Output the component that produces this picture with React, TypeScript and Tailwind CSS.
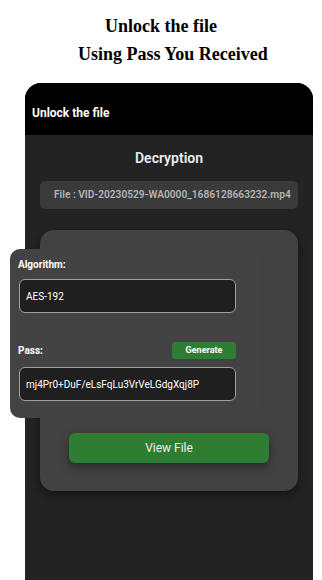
import React from "react";

export default function App() {
  return (
    <div className="w-[322px] h-[580px] bg-white overflow-hidden" style={{ fontFamily: "Roboto, 'Noto Sans', sans-serif" }}>
      {/* Caption above the phone */}
      <div className="h-[83px] pt-[12px] text-black font-bold text-[18px] leading-[28px]" style={{ fontFamily: "'Liberation Serif', serif" }}>
        <div className="pl-[105px]">Unlock the file</div>
        <div className="pl-[78px]">Using Pass You Received</div>
      </div>

      {/* Phone screen */}
      <div className="ml-[25px] w-[288px] h-[497px] bg-[#232323] rounded-t-[16px]">
        <div className="h-[52px] bg-black rounded-t-[16px] flex items-center pl-[7px] pt-[8px] text-white font-bold text-[12px]">
          Unlock the file
        </div>

        <div className="pt-[13px]">
          <div className="text-center text-[#ededed] font-semibold text-[14px] leading-[20px]">Decryption</div>

          <div className="mx-[15px] mt-[13px] h-[28px] rounded-[5px] bg-[#3a3a3a] flex items-center pl-[14px] text-[10.2px] font-semibold text-[#b5b5b5] whitespace-nowrap">
            File : VID-20230529-WA0000_1686128663232.mp4
          </div>

          <div className="mx-[15px] mt-[21px] h-[261px] rounded-[14px] bg-[#424242] shadow-[0_4px_10px_rgba(0,0,0,0.45)] pt-[19px]">
            {/* Panel sticking out on the left */}
            <div className="ml-[-30px] w-[250px] h-[169px] rounded-[10px] bg-[#434343] pt-[10px] pl-[8px]">
              <div className="text-white font-bold text-[10px] leading-[12px]">Algorithm:</div>
              <div className="mt-[8px] ml-[1px] w-[217px] h-[34px] rounded-[6px] bg-[#1f1f1f] border border-[#a0a0a0] flex items-center pl-[6px] text-white text-[10px]">
                AES-192
              </div>

              <div className="mt-[29px] w-[218px] flex items-center justify-between">
                <div className="text-white font-bold text-[10px]">Pass:</div>
                <div className="w-[64px] h-[17px] rounded-[3px] bg-[#2e7d32] flex items-center justify-center text-white font-bold text-[9px]">
                  Generate
                </div>
              </div>
              <div className="mt-[8px] ml-[1px] w-[217px] h-[34px] rounded-[6px] bg-[#1f1f1f] border border-[#a0a0a0] flex items-center pl-[6px] text-white text-[10px] whitespace-nowrap">
                mj4Pr0+DuF/eLsFqLu3VrVeLGdgXqj8P
              </div>
            </div>

            <button className="block mx-auto mt-[15px] w-[200px] h-[30px] rounded-[6px] bg-[#2e7d32] text-[#f0f0f0] text-[12px] shadow-[0_4px_10px_rgba(0,0,0,0.4)]">
              View File
            </button>
          </div>
        </div>
      </div>
    </div>
  );
}
